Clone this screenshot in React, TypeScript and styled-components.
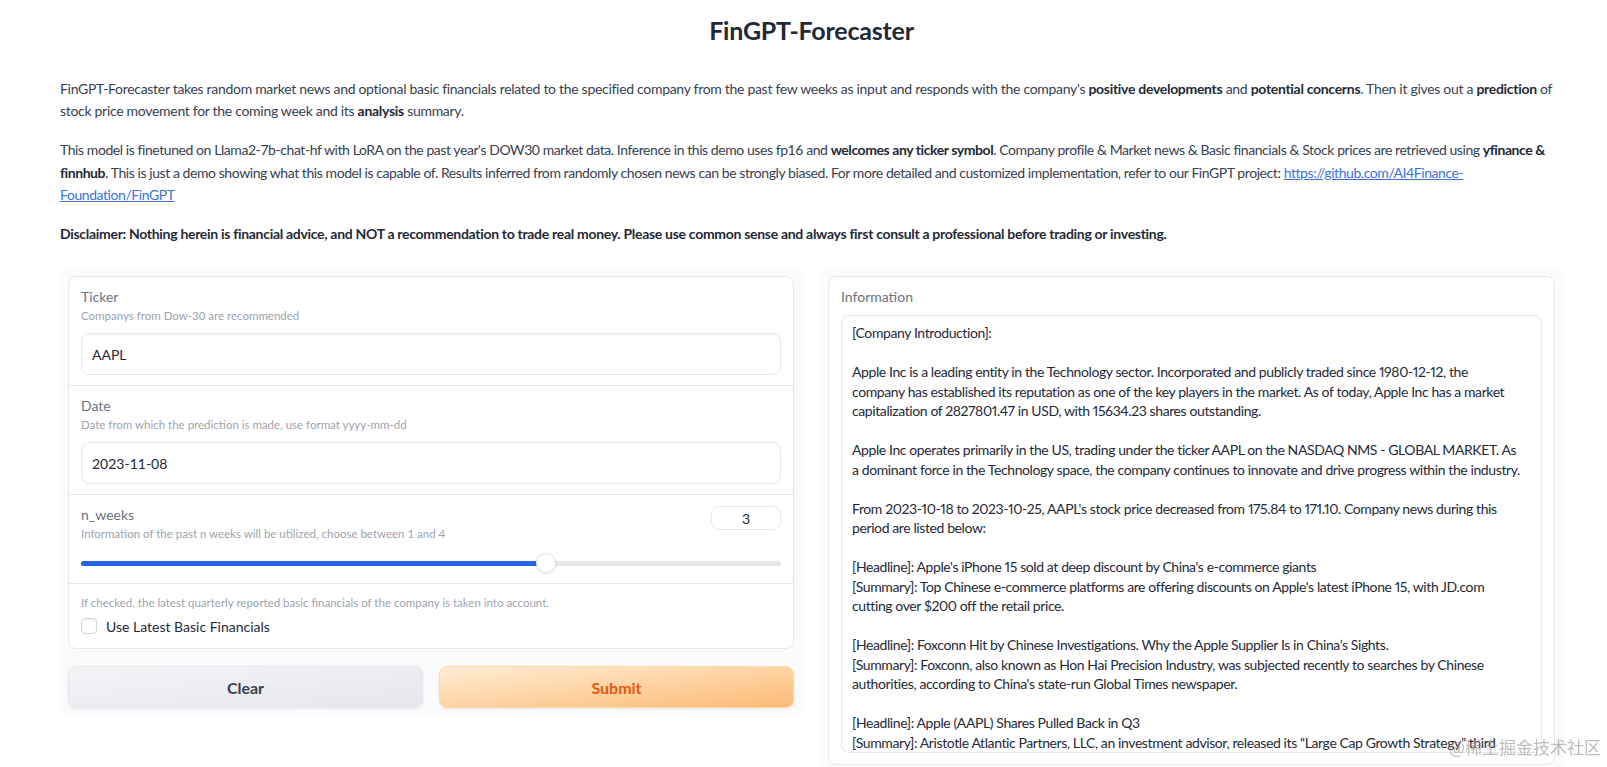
import React from 'react';
import styled, {createGlobalStyle} from "styled-components";

const GlobalStyle = createGlobalStyle`
  * { box-sizing: border-box; }
  html, body { margin: 0; padding: 0; background: #fff; }
  body {
    font-family: "Lato", "Noto Sans", sans-serif;
    color: #374151;
    overflow: hidden;
  }
`

const info = `[Company Introduction]:

Apple Inc is a leading entity in the Technology sector. Incorporated and publicly traded since 1980-12-12, the company has established its reputation as one of the key players in the market. As of today, Apple Inc has a market capitalization of 2827801.47 in USD, with 15634.23 shares outstanding.

Apple Inc operates primarily in the US, trading under the ticker AAPL on the NASDAQ NMS - GLOBAL MARKET. As a dominant force in the Technology space, the company continues to innovate and drive progress within the industry.

From 2023-10-18 to 2023-10-25, AAPL's stock price decreased from 175.84 to 171.10. Company news during this period are listed below:

[Headline]: Apple's iPhone 15 sold at deep discount by China's e-commerce giants
[Summary]: Top Chinese e-commerce platforms are offering discounts on Apple's latest iPhone 15, with JD.com cutting over $200 off the retail price.

[Headline]: Foxconn Hit by Chinese Investigations. Why the Apple Supplier Is in China’s Sights.
[Summary]: Foxconn, also known as Hon Hai Precision Industry, was subjected recently to searches by Chinese authorities, according to China's state-run Global Times newspaper.

[Headline]: Apple (AAPL) Shares Pulled Back in Q3
[Summary]: Aristotle Atlantic Partners, LLC, an investment advisor, released its “Large Cap Growth Strategy” third quarter 2023 investor letter. A copy of the letter can be downloaded here.`

const weeks = {min: 1, max: 4, value: 3};

export default function App() {
    const pct = ((weeks.value - weeks.min) / (weeks.max - weeks.min)) * 100;
    return (
        <>
            <GlobalStyle/>
            <Page>
                <Title>FinGPT-Forecaster</Title>
                <Prose>
                    <Para>FinGPT-Forecaster takes random market news and optional basic financials related to the specified
                        company from the past few weeks as input and responds with the company's <b>positive
                            developments</b> and <b>potential concerns</b>. Then it gives out a <b>prediction</b> of
                        stock price movement for the coming week and its <b>analysis</b> summary.</Para>
                    <Para $tight>This model is finetuned on Llama2-7b-chat-hf with LoRA on the past year's DOW30 market data.
                        Inference in this demo uses fp16 and <b>welcomes any ticker symbol</b>. Company profile & Market
                        news & Basic financials & Stock prices are retrieved using <b>yfinance & finnhub</b>. This is
                        just a demo showing what this model is capable of. Results inferred from randomly chosen news
                        can be strongly biased. For more detailed and customized implementation, refer to our FinGPT
                        project: <a href="#">https://github.com/AI4Finance-Foundation/FinGPT</a></Para>
                    <Para><b>Disclaimer: Nothing herein is financial advice, and NOT a recommendation to trade real money.
                        Please use common sense and always first consult a professional before trading or
                        investing.</b></Para>
                </Prose>
                <Columns>
                    <Panel>
                        <Card>
                            <Block>
                                <Label>Ticker</Label>
                                <Hint>Companys from Dow-30 are recommended</Hint>
                                <TextInput>AAPL</TextInput>
                            </Block>
                            <Block>
                                <Label>Date</Label>
                                <Hint>Date from which the prediction is made, use format yyyy-mm-dd</Hint>
                                <TextInput>2023-11-08</TextInput>
                            </Block>
                            <Block>
                                <LabelRow>
                                    <div>
                                        <Label>n_weeks</Label>
                                        <Hint>Information of the past n weeks will be utilized, choose between 1 and 4</Hint>
                                    </div>
                                    <NumberBox>{weeks.value}</NumberBox>
                                </LabelRow>
                                <Slider>
                                    <Track>
                                        <Fill style={{width: `${pct}%`}}/>
                                    </Track>
                                    <Thumb style={{left: `${pct}%`}}/>
                                </Slider>
                            </Block>
                            <Block $last>
                                <Hint>If checked, the latest quarterly reported basic financials of the company is taken into account.</Hint>
                                <CheckRow>
                                    <CheckBox/>
                                    <span>Use Latest Basic Financials</span>
                                </CheckRow>
                            </Block>
                        </Card>
                        <Buttons>
                            <Button>Clear</Button>
                            <Button $primary>Submit</Button>
                        </Buttons>
                    </Panel>
                    <Panel>
                        <InfoCard>
                            <Label>Information</Label>
                            <TextArea>{info}</TextArea>
                        </InfoCard>
                    </Panel>
                </Columns>
            </Page>
            <Watermark>@稀土掘金技术社区</Watermark>
        </>
    );
}

const Page = styled.div`
  width: 1503px;
  margin-left: 60px;
  height: 767px;
`

const Title = styled.h1`
  margin: 0;
  padding-top: 13px;
  text-align: center;
  font-size: 25px;
  line-height: 34px;
  font-weight: 700;
  letter-spacing: -0.2px;
  color: #1f2937;
`

const Prose = styled.div`
  margin-top: 31px;
  font-size: 14px;
  line-height: 22.4px;
  color: #374151;

  b {
    font-weight: 700;
    color: #1f2937;
  }

  a {
    color: #3b72d9;
    text-decoration: underline;
  }
`

const Para = styled.p<{ $tight?: boolean }>`
  margin: 0 0 16.5px;
  letter-spacing: ${p => p.$tight ? '-0.43px' : '-0.3px'};

  &:last-child {
    margin-bottom: 0;
  }
`

const Columns = styled.div`
  margin-top: 22px;
  display: grid;
  grid-template-columns: 742px 743px;
  gap: 18px;
  align-items: start;
`

const Panel = styled.div`
  background: #fafbfc;
  border-radius: 10px;
  padding: 9px 8px;
  display: flex;
  flex-direction: column;
  gap: 17px;
  box-shadow: 0 0 6px rgba(0, 0, 0, 0.02);
`

const Card = styled.div`
  background: #fff;
  border: 1px solid #e5e7eb;
  border-radius: 8px;
  overflow: hidden;
`

const Block = styled.div<{ $last?: boolean }>`
  padding: 10px 12px;
  border-bottom: ${p => p.$last ? 'none' : '1px solid #e5e7eb'};
`

const Label = styled.div`
  font-size: 14px;
  line-height: 20px;
  color: #6b7280;
`

const Hint = styled.div`
  font-size: 11.5px;
  line-height: 18px;
  color: #9ca3af;
`

const TextInput = styled.div`
  margin-top: 8px;
  height: 42px;
  border: 1px solid #e5e7eb;
  border-radius: 8px;
  padding: 0 10px;
  display: flex;
  align-items: center;
  font-size: 14px;
  color: #1f2937;
  box-shadow: inset 0 1px 2px rgba(0, 0, 0, 0.03);
`

const LabelRow = styled.div`
  display: flex;
  justify-content: space-between;
  align-items: flex-start;
`

const NumberBox = styled.div`
  margin-top: 1px;
  width: 70px;
  height: 24px;
  border: 1px solid #e5e7eb;
  border-radius: 8px;
  display: flex;
  align-items: center;
  justify-content: center;
  font-size: 14px;
  color: #1f2937;
`

const Slider = styled.div`
  position: relative;
  margin-top: 10px;
  height: 20px;
  display: flex;
  align-items: center;
`

const Track = styled.div`
  width: 100%;
  height: 5px;
  border-radius: 3px;
  background: #e5e7eb;
  overflow: hidden;
`

const Fill = styled.div`
  height: 100%;
  background: #2563eb;
`

const Thumb = styled.div`
  position: absolute;
  top: 0;
  width: 20px;
  height: 20px;
  margin-left: -12px;
  border-radius: 50%;
  background: #fff;
  border: 1px solid #e5e7eb;
  box-shadow: 0 1px 3px rgba(0, 0, 0, 0.12);
`

const CheckRow = styled.label`
  margin-top: 2px;
  display: flex;
  align-items: center;
  gap: 9px;
  height: 24px;
  font-size: 14px;
  color: #1f2937;
`

const CheckBox = styled.span`
  width: 16px;
  height: 16px;
  border: 1px solid #d1d5db;
  border-radius: 4px;
  background: #fff;
  box-shadow: inset 0 1px 2px rgba(0, 0, 0, 0.05);
`

const Buttons = styled.div`
  display: grid;
  grid-template-columns: 1fr 1fr;
  gap: 16px;
`

const Button = styled.button<{ $primary?: boolean }>`
  height: 42px;
  border-radius: 8px;
  border: 1px solid ${p => p.$primary ? '#fed7aa' : '#e5e7eb'};
  background: ${p => p.$primary
          ? 'linear-gradient(to bottom right, #ffedd5, #fdba74)'
          : 'linear-gradient(to bottom right, #f3f4f6, #e5e7eb)'};
  color: ${p => p.$primary ? '#ea580c' : '#374151'};
  font-family: inherit;
  font-size: 16px;
  font-weight: 700;
  box-shadow: 0 1px 3px rgba(0, 0, 0, 0.08);
`

const InfoCard = styled(Card)`
  height: 489px;
  padding: 10px 12px 11px;
  display: flex;
  flex-direction: column;
  gap: 8px;
`

const TextArea = styled.div`
  flex: 1;
  overflow: hidden;
  border: 1px solid #e5e7eb;
  border-radius: 8px;
  padding: 7px 18px 7px 10px;
  white-space: pre-wrap;
  font-size: 14px;
  line-height: 19.5px;
  letter-spacing: -0.4px;
  font-variant-numeric: proportional-nums;
  color: #1f2937;
  box-shadow: inset 0 1px 2px rgba(0, 0, 0, 0.03);
`

const Watermark = styled.div`
  position: fixed;
  right: 6px;
  bottom: 8px;
  font-size: 17px;
  color: rgba(160, 160, 160, 0.7);
  font-family: "Noto Sans CJK SC", sans-serif;
`
